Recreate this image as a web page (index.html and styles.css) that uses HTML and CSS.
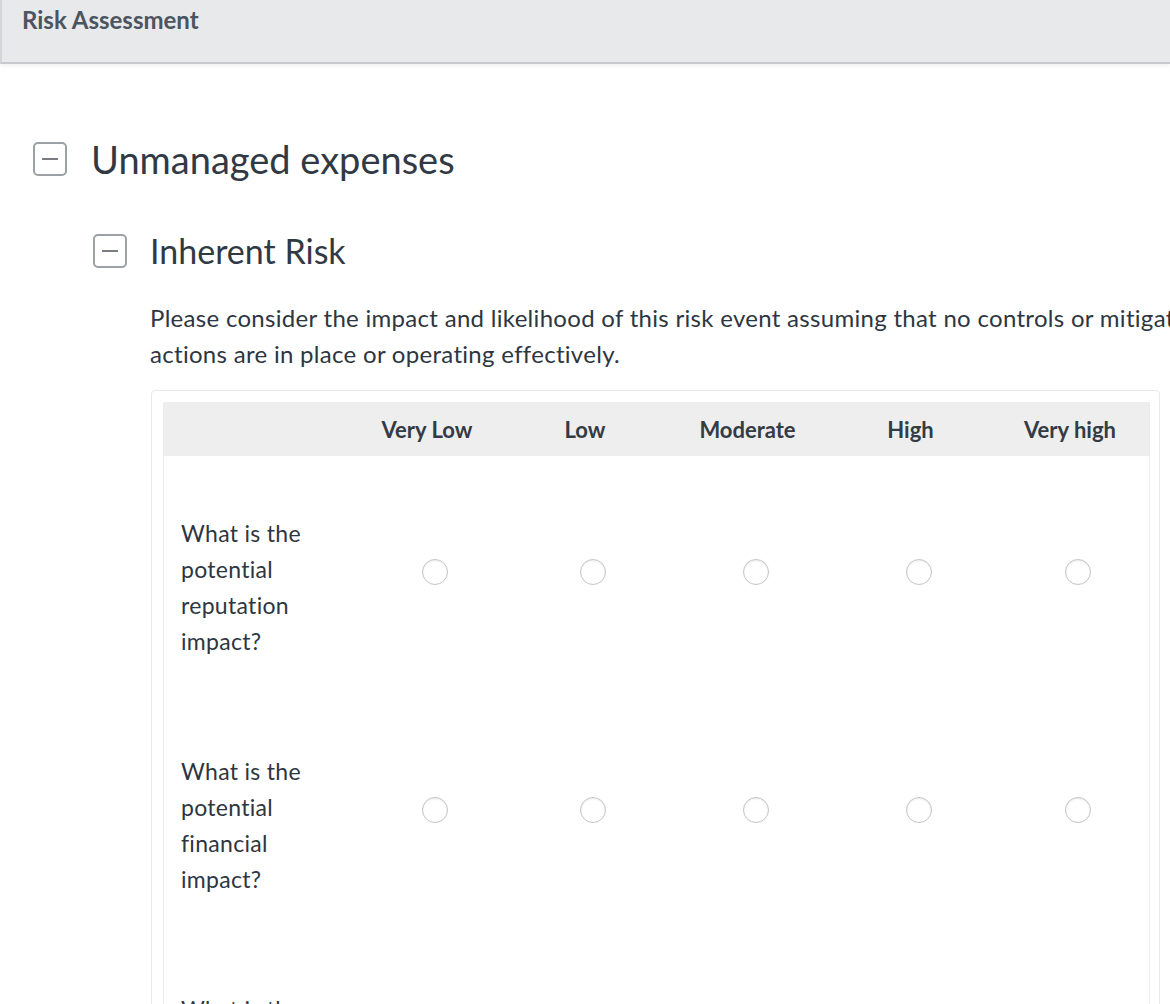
FILE: index.html
```html
<!DOCTYPE html>
<html lang="en">
<head>
<meta charset="utf-8">
<title>Risk Assessment</title>
<link rel="stylesheet" href="styles.css">
</head>
<body>
<header class="topbar"><span class="topbar-title">Risk Assessment</span></header>
<main class="content">
  <section class="group">
    <div class="group-head">
      <span class="toggle"></span>
      <h1 class="group-title">Unmanaged expenses</h1>
    </div>
    <section class="sub">
      <div class="sub-head">
        <span class="toggle"></span>
        <h2 class="sub-title">Inherent Risk</h2>
      </div>
      <p class="intro">Please consider the impact and likelihood of this risk event assuming that no controls or mitigating actions are in place or operating effectively.</p>
      <div class="card">
        <table class="matrix">
          <thead>
            <tr>
              <th class="q-col"></th>
              <th class="c1">Very Low</th>
              <th class="c2">Low</th>
              <th class="c3">Moderate</th>
              <th class="c4">High</th>
              <th class="c5">Very high</th>
            </tr>
          </thead>
          <tbody>
            <tr>
              <td class="question">What is the potential reputation impact?</td>
              <td class="opt"><span class="radio"></span></td>
              <td class="opt"><span class="radio"></span></td>
              <td class="opt"><span class="radio"></span></td>
              <td class="opt"><span class="radio"></span></td>
              <td class="opt"><span class="radio"></span></td>
            </tr>
            <tr>
              <td class="question">What is the potential financial impact?</td>
              <td class="opt"><span class="radio"></span></td>
              <td class="opt"><span class="radio"></span></td>
              <td class="opt"><span class="radio"></span></td>
              <td class="opt"><span class="radio"></span></td>
              <td class="opt"><span class="radio"></span></td>
            </tr>
            <tr>
              <td class="question">What is the potential operational impact?</td>
              <td class="opt"><span class="radio"></span></td>
              <td class="opt"><span class="radio"></span></td>
              <td class="opt"><span class="radio"></span></td>
              <td class="opt"><span class="radio"></span></td>
              <td class="opt"><span class="radio"></span></td>
            </tr>
          </tbody>
        </table>
      </div>
    </section>
  </section>
</main>
</body>
</html>
```

FILE: styles.css
```css
html, body {
  margin: 0;
  padding: 0;
  overflow: hidden;
  background: #ffffff;
}
body {
  font-family: "Lato", "Liberation Sans", sans-serif;
  color: #2d3641;
  width: 1170px;
}
.topbar {
  height: 62px;
  background: #e8e9eb;
  border-left: 2px solid #d3d6d9;
  border-bottom: 2px solid #c6c9cd;
  box-shadow: 0 2px 4px rgba(0, 0, 0, 0.06);
  box-sizing: content-box;
  padding-left: 20px;
}
.topbar-title {
  display: block;
  padding-top: 6px;
  font-size: 24px;
  line-height: 28px;
  font-weight: 700;
  color: #4a5561;
}
.content {
  padding-left: 33px;
}
.group-head {
  display: flex;
  align-items: center;
  gap: 24px;
  margin-top: 78px;
  height: 34px;
}
.toggle {
  width: 30px;
  height: 30px;
  border: 2px solid #9ca1a6;
  border-radius: 5px;
  position: relative;
  flex: none;
}
.toggle::after {
  content: "";
  position: absolute;
  left: 7px;
  right: 7px;
  top: 14px;
  height: 2px;
  background: #777d83;
}
.group-title {
  margin: 0;
  font-size: 38px;
  font-weight: 400;
  line-height: 40px;
  color: #303944;
}
.sub {
  padding-left: 60px;
}
.sub-head {
  display: flex;
  align-items: center;
  gap: 23px;
  margin-top: 58px;
  height: 34px;
}
.sub-title {
  margin: 0;
  font-size: 34px;
  font-weight: 400;
  line-height: 36px;
  color: #303944;
}
.intro {
  margin: 32px 0 0 57px;
  width: 1100px;
  font-size: 24px;
  letter-spacing: 0.3px;
  line-height: 36px;
  color: #2d3641;
}
.card {
  margin: 18px 0 0 58px;
  width: 985px;
  border: 1px solid #e9e9e9;
  border-radius: 4px;
  padding: 11px;
}
.matrix {
  width: 987px;
  border-collapse: collapse;
  border-left: 1px solid #ececec;
  border-right: 1px solid #ececec;
  table-layout: fixed;
}
.matrix th {
  background: #eeeeee;
  height: 54px;
  padding: 0;
  font-size: 22px;
  font-weight: 700;
  color: #333b45;
  text-align: center;
}
.q-col { width: 185px; }
.c1 { width: 156px; }
.c2 { width: 160px; }
.c3 { width: 165px; }
.c4 { width: 161px; }
.c5 { width: 158px; }
.question {
  padding: 59px 17px 35px 17px;
  font-size: 23px;
  letter-spacing: 0.3px;
  line-height: 36px;
  color: #2d3641;
  vertical-align: top;
}
.opt {
  text-align: center;
  vertical-align: middle;
  padding: 0 0 6px 16px;
}
.radio {
  display: inline-block;
  width: 26px;
  height: 26px;
  box-sizing: border-box;
  border: 1px solid #c4c4c4;
  border-radius: 50%;
  background: #ffffff;
  box-shadow: inset 0 1px 2px rgba(0, 0, 0, 0.08);
  vertical-align: middle;
}
```
